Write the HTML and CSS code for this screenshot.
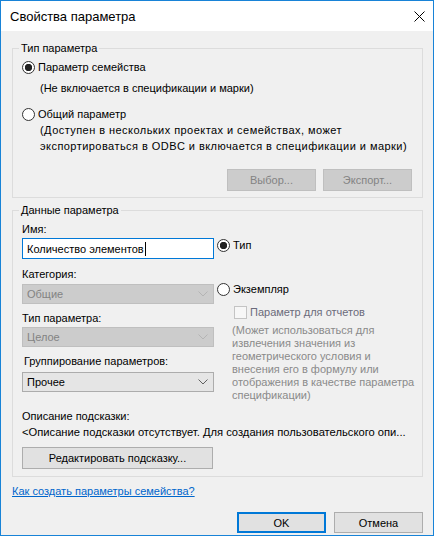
FILE: index.html
```html
<!DOCTYPE html>
<html lang="ru">
<head>
  <meta charset="UTF-8" />
  <title>Свойства параметра</title>
  <link rel="stylesheet" href="styles.css">
</head>
<body>

  <div class="dialog">
    <div class="titlebar">
      <span class="title">Свойства параметра</span>
      <span class="close">
        <svg width="11" height="11" viewBox="0 0 11 11"><path d="M0.5 0.5 L10.5 10.5 M10.5 0.5 L0.5 10.5" stroke="#000" stroke-width="1" fill="none"/></svg>
      </span>
    </div>

    <div class="content">
      <fieldset class="group group-type">
        <legend>Тип параметра</legend>
        <div class="radio-row row-family"><span class="radio checked"></span>Параметр семейства</div>
        <div class="note note-family">(Не включается в спецификации и марки)</div>
        <div class="radio-row row-shared"><span class="radio"></span>Общий параметр</div>
        <div class="note note-shared">(Доступен в нескольких проектах и семействах, может<br>экспортироваться в ODBC и включается в спецификации и марки)</div>
        <div class="btn-row">
          <button class="btn" disabled>Выбор...</button>
          <button class="btn" disabled>Экспорт...</button>
        </div>
      </fieldset>

      <fieldset class="group group-data">
        <legend>Данные параметра</legend>
        <div class="cols">
          <div class="col-left">
            <div class="field-label lbl-name">Имя:</div>
            <div class="textbox">Количество элементов<span class="caret"></span></div>
            <div class="field-label lbl-cat">Категория:</div>
            <div class="combo disabled">
              <span>Общие</span>
              <svg width="10" height="6" viewBox="0 0 10 6"><path d="M0.5 0.5 L5 5 L9.5 0.5" stroke="#b4b4b4" fill="none"/></svg>
            </div>
            <div class="field-label lbl-type">Тип параметра:</div>
            <div class="combo disabled">
              <span>Целое</span>
              <svg width="10" height="6" viewBox="0 0 10 6"><path d="M0.5 0.5 L5 5 L9.5 0.5" stroke="#b4b4b4" fill="none"/></svg>
            </div>
            <div class="field-label lbl-group">Группирование параметров:</div>
            <div class="combo combo-group">
              <span>Прочее</span>
              <svg width="10" height="6" viewBox="0 0 10 6"><path d="M0.5 0.5 L5 5 L9.5 0.5" stroke="#606060" fill="none"/></svg>
            </div>
          </div>
          <div class="col-right">
            <div class="radio-row row-type"><span class="radio checked"></span>Тип</div>
            <div class="radio-row row-inst"><span class="radio"></span>Экземпляр</div>
            <div class="check-row"><span class="checkbox"></span>Параметр для отчетов</div>
            <div class="report-note">(Может использоваться для<br>извлечения значения из<br>геометрического условия и<br>внесения его в формулу или<br>отображения в качестве параметра<br>спецификации)</div>
          </div>
        </div>
        <div class="field-label lbl-tip">Описание подсказки:</div>
        <div class="tip-text">&lt;Описание подсказки отсутствует. Для создания пользовательского опи...</div>
        <button class="btn btn-edit">Редактировать подсказку...</button>
      </fieldset>

      <a class="help-link" href="#">Как создать параметры семейства?</a>

      <div class="footer">
        <button class="btn btn-ok">OK</button>
        <button class="btn">Отмена</button>
      </div>
    </div>
  </div>

</body>
</html>
```

FILE: styles.css
```css
* {
  box-sizing: border-box;
}
body {
  margin: 0;
  font-family: "Segoe UI", "Liberation Sans", sans-serif;
  font-size: 11px;
  color: #000;
  background: #fff;
}
.dialog {
  width: 434px;
  height: 536px;
  border: 1px solid #1883d7;
  background: #f0f0f0;
  display: flex;
  flex-direction: column;
}
.titlebar {
  height: 30px;
  background: #fff;
  display: flex;
  align-items: center;
  justify-content: space-between;
  padding-left: 9px;
  flex: none;
}
.title {
  font-size: 13px;
}
.close {
  width: 28px;
  height: 30px;
  display: flex;
  align-items: center;
  justify-content: center;
}
.content {
  padding: 9px 10px 0 11px;
  display: flex;
  flex-direction: column;
}

/* group boxes */
.group {
  margin: 0;
  border: 1px solid #dcdcdc;
  padding: 0 10px 6px 9px;
  min-width: 0;
}
.group legend {
  padding: 0 2px;
  margin-left: -3px;
  line-height: 16px;
}
.group-data {
  margin-top: 4px;
  padding-bottom: 7px;
}

.radio-row {
  display: flex;
  align-items: center;
  gap: 3px;
  height: 16px;
  line-height: 16px;
}
.radio {
  width: 13px;
  height: 13px;
  flex: none;
  border: 1px solid #333;
  border-radius: 50%;
  background: #fff;
}
.radio.checked {
  background: radial-gradient(circle, #222 0, #222 3.4px, #fff 4px);
}
.row-family {
  margin-top: 3px;
}
.row-shared {
  margin-top: 10px;
}
.note {
  margin-left: 18px;
  line-height: 16px;
  white-space: nowrap;
}
.note-family {
  margin-top: 5px;
}
.note-shared {
  letter-spacing: 0.45px;
}

.btn-row {
  display: flex;
  justify-content: flex-end;
  gap: 7px;
  margin-top: 15px;
}
.btn {
  width: 89px;
  height: 22px;
  padding: 0;
  font: inherit;
  color: #000;
  background: #e1e1e1;
  border: 1px solid #adadad;
}
.btn:disabled {
  background: #cccccc;
  border-color: #bfbfbf;
  color: #838383;
}

/* data group */
.cols {
  display: flex;
  gap: 3px;
}
.col-left {
  width: 192px;
  flex: none;
}
.field-label {
  line-height: 16px;
}
.lbl-name {
  margin-top: 3px;
}
.lbl-cat {
  margin-top: 7px;
}
.lbl-type {
  margin-top: 6px;
}
.lbl-group {
  margin-top: 6px;
  padding-left: 2px;
}
.lbl-tip {
  margin-top: 6px;
}
.textbox {
  margin-top: 1px;
  height: 21px;
  background: #fff;
  border: 1px solid #0078d7;
  padding-left: 4px;
  display: flex;
  align-items: center;
}
.caret {
  display: inline-block;
  width: 1px;
  height: 14px;
  background: #000;
  margin-left: 1px;
}
.combo {
  height: 20px;
  margin-top: 2px;
  padding: 0 5px 0 4px;
  display: flex;
  align-items: center;
  justify-content: space-between;
  background: #e5e5e5;
  border: 1px solid #acacac;
}
.combo.disabled {
  background: #cccccc;
  border-color: #bfbfbf;
  color: #838383;
}
.lbl-type + .combo {
  margin-top: 1px;
}
.combo-group {
  margin-top: 3px;
}

.col-right {
  flex: 1;
}
.row-type {
  margin-top: 19px;
}
.row-inst {
  margin-top: 28px;
}
.check-row {
  margin-top: 7px;
  padding-left: 17px;
  display: flex;
  align-items: center;
  gap: 3px;
  height: 16px;
  color: #6b6b7b;
}
.checkbox {
  width: 13px;
  height: 13px;
  border: 1px solid #c4c4c4;
  background: #f7f7f7;
}
.report-note {
  margin-top: 4px;
  padding-left: 15px;
  line-height: 13px;
  color: #8a8a8a;
  white-space: nowrap;
}

.tip-text {
  line-height: 16px;
  white-space: nowrap;
  font-size: 11.2px;
}
.btn-edit {
  width: 191px;
  margin-top: 7px;
}

.help-link {
  margin-top: 6px;
  line-height: 16px;
  color: #0066cc;
  text-decoration: underline;
  align-self: flex-start;
}

.footer {
  display: flex;
  justify-content: flex-end;
  gap: 8px;
  margin-top: 13px;
}
.footer .btn {
  height: 21px;
}
.btn-ok {
  border: 2px solid #0078d7;
}
```
